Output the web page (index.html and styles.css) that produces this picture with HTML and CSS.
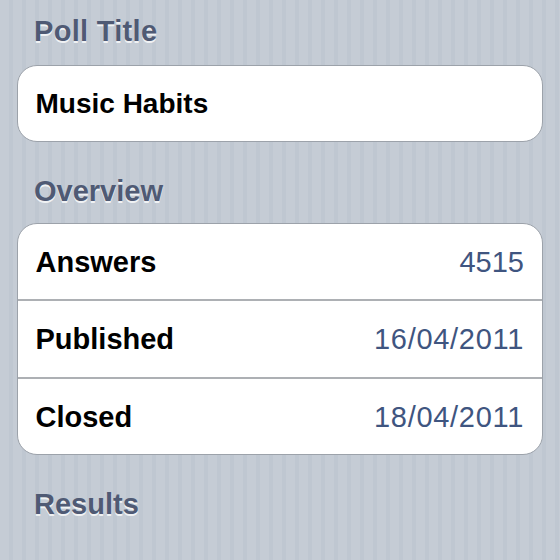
FILE: index.html
```html
<!DOCTYPE html>
<html lang="en">
<head>
    <meta charset="UTF-8">
    <title>Poll Details</title>
    <link rel="stylesheet" href="styles.css">
</head>
<body>
    <h2 class="section-title first">Poll Title</h2>
    <ul class="group">
        <li class="row single"><span class="label name">Music Habits</span></li>
    </ul>

    <h2 class="section-title">Overview</h2>
    <ul class="group">
        <li class="row"><span class="label">Answers</span><span class="value">4515</span></li>
        <li class="row"><span class="label">Published</span><span class="value date">16/04/2011</span></li>
        <li class="row"><span class="label">Closed</span><span class="value date">18/04/2011</span></li>
    </ul>

    <h2 class="section-title">Results</h2>
</body>
</html>
```

FILE: styles.css
```css
html, body {
    height: 100%;
}

body {
    margin: 0;
    padding: 0 17px;
    box-sizing: border-box;
    overflow: hidden;
    font-family: "Liberation Sans", Arial, sans-serif;
    background-color: #c4cbd4;
    background-image: repeating-linear-gradient(90deg, #c5ccd5 0, #c5ccd5 9px, #bfc7d1 9px, #bfc7d1 13px);
}

/* Section headings */
.section-title {
    height: 32px;
    margin: 33px 0 16px;
    padding-left: 17px;
    font-size: 29px;
    line-height: 32px;
    font-weight: bold;
    color: #4f5a74;
    text-shadow: 0 2px 0 rgba(255, 255, 255, 0.75);
}

.section-title.first {
    margin: 15px 0 18px;
    letter-spacing: 0.3px;
}

/* Rounded groups */
.group {
    list-style: none;
    margin: 0;
    padding: 0;
    background-color: #fff;
    border: 1.5px solid #9ca2aa;
    border-radius: 20px;
    overflow: hidden;
}

.row {
    display: flex;
    justify-content: space-between;
    align-items: center;
    height: 73.3px;
    padding: 2px 18px 0 17.5px;
    border-top: 2px solid #adb0b4;
}

.row:first-child {
    border-top: none;
}

.row.single {
    height: 75px;
    padding-top: 0;
}

.label {
    font-size: 29px;
    font-weight: bold;
    color: #000;
}

.label.name {
    font-size: 28px;
}

.value {
    font-size: 29px;
    color: #3f5580;
}

.value.date {
    letter-spacing: 0.7px;
}
```
